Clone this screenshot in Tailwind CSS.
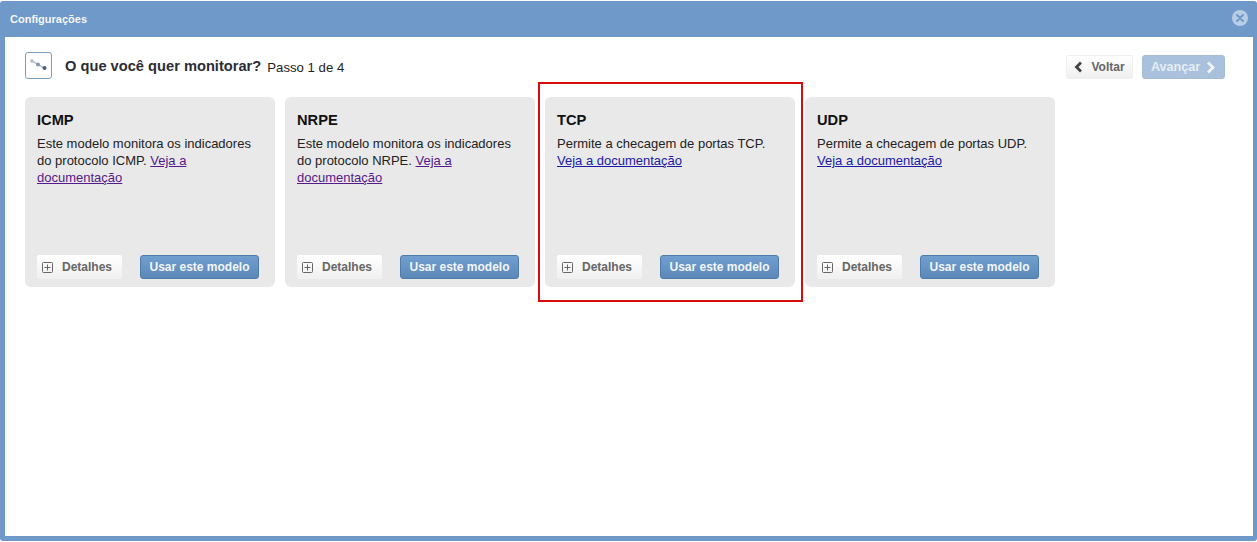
<!DOCTYPE html>
<html lang="en">
<head>
  <meta charset="UTF-8">
  <title>Configurações</title>
  <script src="https://cdn.jsdelivr.net/npm/@tailwindcss/browser@4"></script>
</head>
<body class="bg-white h-[542px] overflow-hidden font-['Liberation_Sans',Arial,sans-serif] text-[#222]">
  <div class="relative mt-px h-[540px] w-[1257px] rounded-[3px] bg-[#6f99c9] pl-[5px] pr-1 pb-[5px] flex flex-col">
    <!-- Title bar -->
    <div class="h-9 shrink-0 flex items-center justify-between -ml-[5px] -mr-1 pl-2.5 pr-[9px]">
      <span class="text-[11px] font-bold text-white/95">Configurações</span>
      <span class="-mt-0.5 w-4 h-4 rounded-full bg-[#b9cde4] flex items-center justify-center">
        <svg width="10" height="10" viewBox="0 0 10 10"><path d="M2 2l6 6M8 2l-6 6" stroke="#6f99c9" stroke-width="2" stroke-linecap="round"/></svg>
      </span>
    </div>

    <div class="flex-1 bg-white pl-5 pr-7">
      <!-- Wizard header -->
      <div class="flex items-center justify-between h-[60px]">
        <div class="flex items-center -mt-[3px]">
          <span class="w-[27px] h-[27px] rounded-[3px] border border-[#7d9cbd] flex items-center justify-center">
            <svg width="19" height="13" viewBox="0 0 19 13">
              <path d="M3 2l6 3.5 6 3.5" stroke="#9fb4cc" stroke-width="1.2" fill="none"/>
              <circle cx="3" cy="2" r="1.8" fill="#a9bdd3"/>
              <circle cx="9" cy="5.5" r="1.9" fill="#7e97b3"/>
              <circle cx="15.5" cy="9" r="2" fill="#43607f"/>
            </svg>
          </span>
          <h1 class="ml-[13px] text-[14.67px] font-bold text-[#2d2d35]">O que você quer monitorar?</h1>
          <span class="ml-1.5 mt-[4px] text-[13.2px] text-[#222]">Passo 1 de 4</span>
        </div>
        <div class="flex items-center gap-[9px] -mt-px">
          <button class="h-6 w-[67px] flex items-center justify-center gap-2 rounded-[2px] border border-[#f0f0f0] bg-gradient-to-b from-white to-[#efefef] text-xs font-bold text-[#666]">
            <svg width="9" height="12" viewBox="0 0 9 12"><path d="M7 1.5L2.5 6 7 10.5" stroke="#444" stroke-width="2.8" fill="none"/></svg>
            Voltar
          </button>
          <button class="h-6 w-[83px] flex items-center justify-center gap-1.5 rounded-[3px] border border-[#a3bcd8] bg-[#a9c1dc] pt-px text-[12.6px] font-bold text-[#e4edf6]">
            Avançar
            <svg width="10" height="13" viewBox="0 0 10 13"><path d="M2 1.5L7 6.5 2 11.5" stroke="#eef3f9" stroke-width="2.8" fill="none"/></svg>
          </button>
        </div>
      </div>

      <!-- Model cards -->
      <div class="flex gap-2.5">
        <div class="w-[250px] h-[190px] rounded-md bg-[#e9e9e9] px-3 pt-[14px] pb-2 flex flex-col">
          <h2 class="text-[14.67px] font-bold text-[#111] leading-[18px]">ICMP</h2>
          <p class="mt-[6px] text-[13px] leading-[17px] text-[#222]">Este modelo monitora os indicadores do protocolo ICMP. <a href="#" class="underline text-[#551a8b]">Veja a documentação</a></p>
          <div class="mt-auto flex items-center justify-between">
            <button class="h-6 w-[85px] flex items-center pl-[5px] rounded-[2px] bg-gradient-to-b from-white to-[#f0f0f0] text-xs font-bold text-[#666]">
              <svg width="11" height="11" viewBox="0 0 11 11"><rect x="0.5" y="0.5" width="10" height="10" rx="1" fill="none" stroke="#666"/><path d="M2.5 5.5h6M5.5 2.5v6" stroke="#666"/></svg>
              <span class="ml-[9px]">Detalhes</span>
            </button>
            <button class="mr-1 h-6 w-[119px] rounded-[3px] border border-[#4f7dab] bg-gradient-to-b from-[#709fcf] to-[#5c88b8] text-xs font-bold text-[#f2f6fa]">Usar este modelo</button>
          </div>
        </div>

        <div class="w-[250px] h-[190px] rounded-md bg-[#e9e9e9] px-3 pt-[14px] pb-2 flex flex-col">
          <h2 class="text-[14.67px] font-bold text-[#111] leading-[18px]">NRPE</h2>
          <p class="mt-[6px] text-[13px] leading-[17px] text-[#222]">Este modelo monitora os indicadores do protocolo NRPE. <a href="#" class="underline text-[#551a8b]">Veja a documentação</a></p>
          <div class="mt-auto flex items-center justify-between">
            <button class="h-6 w-[85px] flex items-center pl-[5px] rounded-[2px] bg-gradient-to-b from-white to-[#f0f0f0] text-xs font-bold text-[#666]">
              <svg width="11" height="11" viewBox="0 0 11 11"><rect x="0.5" y="0.5" width="10" height="10" rx="1" fill="none" stroke="#666"/><path d="M2.5 5.5h6M5.5 2.5v6" stroke="#666"/></svg>
              <span class="ml-[9px]">Detalhes</span>
            </button>
            <button class="mr-1 h-6 w-[119px] rounded-[3px] border border-[#4f7dab] bg-gradient-to-b from-[#709fcf] to-[#5c88b8] text-xs font-bold text-[#f2f6fa]">Usar este modelo</button>
          </div>
        </div>

        <div class="w-[250px] h-[190px] rounded-md bg-[#e9e9e9] px-3 pt-[14px] pb-2 flex flex-col">
          <h2 class="text-[14.67px] font-bold text-[#111] leading-[18px]">TCP</h2>
          <p class="mt-[6px] text-[13px] leading-[17px] text-[#222]">Permite a checagem de portas TCP.<br><a href="#" class="underline text-[#1a1aa6]">Veja a documentação</a></p>
          <div class="mt-auto flex items-center justify-between">
            <button class="h-6 w-[85px] flex items-center pl-[5px] rounded-[2px] bg-gradient-to-b from-white to-[#f0f0f0] text-xs font-bold text-[#666]">
              <svg width="11" height="11" viewBox="0 0 11 11"><rect x="0.5" y="0.5" width="10" height="10" rx="1" fill="none" stroke="#666"/><path d="M2.5 5.5h6M5.5 2.5v6" stroke="#666"/></svg>
              <span class="ml-[9px]">Detalhes</span>
            </button>
            <button class="mr-1 h-6 w-[119px] rounded-[3px] border border-[#4f7dab] bg-gradient-to-b from-[#709fcf] to-[#5c88b8] text-xs font-bold text-[#f2f6fa]">Usar este modelo</button>
          </div>
        </div>

        <div class="w-[250px] h-[190px] rounded-md bg-[#e9e9e9] px-3 pt-[14px] pb-2 flex flex-col">
          <h2 class="text-[14.67px] font-bold text-[#111] leading-[18px]">UDP</h2>
          <p class="mt-[6px] text-[13px] leading-[17px] text-[#222]">Permite a checagem de portas UDP.<br><a href="#" class="underline text-[#1a1aa6]">Veja a documentação</a></p>
          <div class="mt-auto flex items-center justify-between">
            <button class="h-6 w-[85px] flex items-center pl-[5px] rounded-[2px] bg-gradient-to-b from-white to-[#f0f0f0] text-xs font-bold text-[#666]">
              <svg width="11" height="11" viewBox="0 0 11 11"><rect x="0.5" y="0.5" width="10" height="10" rx="1" fill="none" stroke="#666"/><path d="M2.5 5.5h6M5.5 2.5v6" stroke="#666"/></svg>
              <span class="ml-[9px]">Detalhes</span>
            </button>
            <button class="mr-1 h-6 w-[119px] rounded-[3px] border border-[#4f7dab] bg-gradient-to-b from-[#709fcf] to-[#5c88b8] text-xs font-bold text-[#f2f6fa]">Usar este modelo</button>
          </div>
        </div>
      </div>
    </div>

    <!-- Red highlight over the TCP card -->
    <div class="absolute left-[538px] top-[81px] w-[265px] h-[220px] border-2 border-[#d40c0c]"></div>
  </div>
</body>
</html>
